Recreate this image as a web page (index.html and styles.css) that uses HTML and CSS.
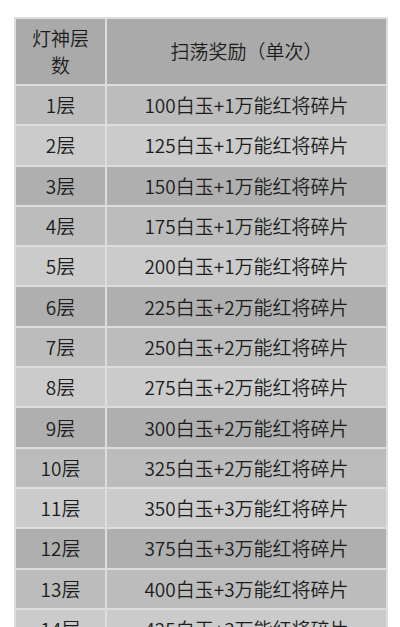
FILE: index.html
```html
<!DOCTYPE html>
<html lang="zh-CN">
<head>
<meta charset="utf-8">
<link rel="stylesheet" href="styles.css">
</head>
<body>
<div class="page">
<table class="tbl">
  <thead>
    <tr><th class="c1">灯神层数</th><th class="c2">扫荡奖励（单次）</th></tr>
  </thead>
  <tbody>
    <tr><td>1层</td><td>100白玉+1万能红将碎片</td></tr>
    <tr><td>2层</td><td>125白玉+1万能红将碎片</td></tr>
    <tr><td>3层</td><td>150白玉+1万能红将碎片</td></tr>
    <tr><td>4层</td><td>175白玉+1万能红将碎片</td></tr>
    <tr><td>5层</td><td>200白玉+1万能红将碎片</td></tr>
    <tr><td>6层</td><td>225白玉+2万能红将碎片</td></tr>
    <tr><td>7层</td><td>250白玉+2万能红将碎片</td></tr>
    <tr><td>8层</td><td>275白玉+2万能红将碎片</td></tr>
    <tr><td>9层</td><td>300白玉+2万能红将碎片</td></tr>
    <tr><td>10层</td><td>325白玉+2万能红将碎片</td></tr>
    <tr><td>11层</td><td>350白玉+3万能红将碎片</td></tr>
    <tr><td>12层</td><td>375白玉+3万能红将碎片</td></tr>
    <tr><td>13层</td><td>400白玉+3万能红将碎片</td></tr>
    <tr><td>14层</td><td>425白玉+3万能红将碎片</td></tr>
  </tbody>
</table>
</div>
</body>
</html>
```
FILE: styles.css
```css
html, body {
  margin: 0;
  padding: 0;
  background: #ffffff;
}
.page {
  padding: 17px 12px 0 14px;
  height: 627px;
  overflow: hidden;
  box-sizing: border-box;
}
.tbl {
  width: 374px;
  border-collapse: collapse;
  table-layout: fixed;
  font-family: "Noto Sans CJK SC", sans-serif;
  font-size: 19px;
  color: #1c1c1c;
}
.tbl th, .tbl td {
  border: 2px solid #dcdddc;
  text-align: center;
  font-weight: 350;
  padding: 0;
}
.tbl th {
  background: #a9aaa9;
  height: 63px;
  line-height: 27px;
  padding-bottom: 2px;
}
.tbl th.c1 {
  width: 91px;
  padding: 0 10px 2px;
  box-sizing: border-box;
}
.tbl td {
  height: 38.3px;
  line-height: 24px;
}
.tbl tbody tr:nth-child(3n+1) td { background: #bbbcbb; }
.tbl tbody tr:nth-child(3n+2) td { background: #cacbca; }
.tbl tbody tr:nth-child(3n) td { background: #aeafae; }
```
